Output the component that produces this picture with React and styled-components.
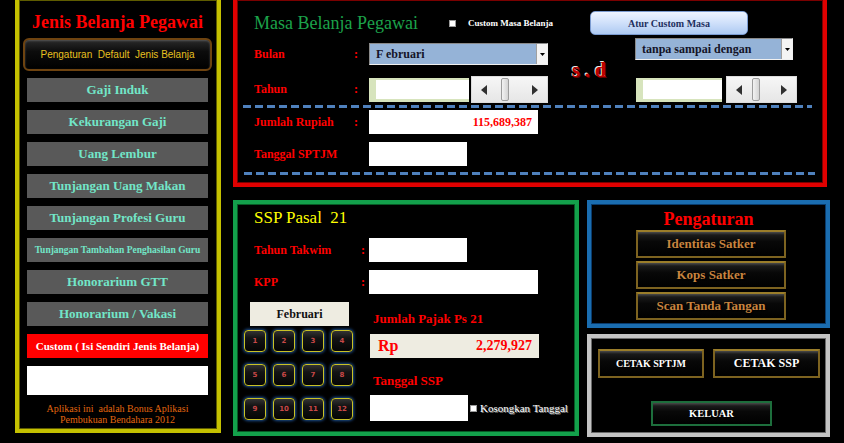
import React from 'react'
import styled, { createGlobalStyle } from 'styled-components'

const serif = `'Liberation Serif', 'Times New Roman', serif`

const GlobalStyle = createGlobalStyle`
  html, body { margin: 0; padding: 0; background: #000; }
  body { width: 844px; height: 443px; overflow: hidden; font-family: ${serif}; }
  * { box-sizing: border-box; }
`

const Page = styled.div`
  display: flex;
  gap: 12px;
  padding-left: 15px;
  height: 443px;
  background: #000;
`

/* ---------- left side menu ---------- */

const Sidebar = styled.aside`
  width: 206px;
  height: 433px;
  border: 4px solid #c4c000;
  border-top: none;
  box-shadow: inset 0 0 0 1px #5e5c00;
  padding: 0 9px 0 8px;
  display: flex;
  flex-direction: column;
`

const SideTitle = styled.h1`
  margin: 10px 0 0;
  line-height: 24px;
  font-size: 18px;
  font-weight: bold;
  color: #ff0000;
  text-align: center;
`

const DefaultBox = styled.div`
  margin: 4px -4px 0;
  height: 33px;
  display: flex;
  align-items: center;
  justify-content: center;
  border: 2px solid #6e4310;
  border-radius: 6px;
  background: linear-gradient(#2a2a2a, #0c0c0c 40%, #000);
  box-shadow: inset 0 1px 2px #555;
  font-family: 'Liberation Sans', Arial, sans-serif;
  font-size: 10px;
  color: #e8c020;
  white-space: pre;
`

const MenuList = styled.div`
  margin-top: 7px;
  display: flex;
  flex-direction: column;
  gap: 8px;
`

const MenuButton = styled.div`
  height: 24px;
  display: flex;
  align-items: center;
  justify-content: center;
  background: ${p => (p.$custom ? '#ff0000' : '#595959')};
  color: ${p => (p.$custom ? '#ffffff' : '#72e6c8')};
  font-weight: bold;
  font-size: ${p => p.$size || 13}px;
  white-space: nowrap;
`

const Blank = styled.div`
  margin-top: 8px;
  height: 29px;
  background: #fff;
`

const SideNote = styled.p`
  margin: 8px 0 0;
  font-size: 10px;
  line-height: 11px;
  color: #e2660f;
  text-align: center;
  white-space: pre;
`

/* ---------- shared ---------- */

const Main = styled.div`
  width: 597px;
  display: flex;
  flex-direction: column;
`

const Panel = styled.section`
  width: ${p => p.$w}px;
  height: ${p => p.$h}px;
  border: 4px solid ${p => p.$color};
  border-top: ${p => (p.$open ? 'none' : `4px solid ${p.$color}`)};
  box-shadow: inset 0 0 0 1px ${p => p.$shade};
  display: flex;
  flex-direction: column;
`

const FieldRow = styled.div`
  display: flex;
  align-items: center;
  height: ${p => p.$h || 24}px;
  margin-top: ${p => p.$mt || 0}px;
  padding-left: ${p => p.$pl ?? 17}px;
`

const Label = styled.span`
  width: ${p => p.$w || 98}px;
  color: #ff0000;
  font-weight: bold;
  font-size: ${p => p.$size || 12}px;
  white-space: nowrap;
`

const Colon = styled.span`
  width: ${p => p.$w || 17}px;
  padding-left: 2px;
  color: #ff0000;
  font-weight: bold;
  font-size: 12px;
`

const Box = styled.div`
  width: ${p => p.$w}px;
  height: ${p => p.$h || 24}px;
  background: ${p => p.$bg || '#ffffff'};
  display: flex;
  align-items: center;
  justify-content: flex-end;
  padding-right: 6px;
  color: #ff0000;
  font-weight: bold;
  font-size: 12px;
`

const Check = styled.span`
  width: 7px;
  height: 7px;
  background: #fff;
  border: 1px solid #9a9a9a;
  flex: none;
`

const Dash = styled.div`
  height: 3px;
  margin: ${p => p.$m};
  background: repeating-linear-gradient(90deg, #4f81bd 0 8px, transparent 8px 12px);
`

/* ---------- masa belanja ---------- */

const Header = styled.div`
  display: flex;
  align-items: center;
  margin-top: 11px;
  height: 24px;
  padding-left: 17px;
`

const HeaderTitle = styled.h2`
  margin: 0;
  width: 195px;
  font-size: 18px;
  font-weight: normal;
  line-height: 24px;
  color: #1ca24a;
  white-space: nowrap;
`

const CheckLabel = styled.label`
  width: 141px;
  display: flex;
  align-items: center;
  gap: 12px;
  font-size: 9px;
  font-weight: bold;
  color: #fff;
  white-space: nowrap;
`

const AturButton = styled.button`
  width: 158px;
  height: 24px;
  padding: 0;
  border: 1px solid #7b9bd0;
  border-radius: 5px;
  background: linear-gradient(#eef4ff, #cfe0fa 50%, #aecaf2);
  color: #1f3060;
  font-family: ${serif};
  font-weight: bold;
  font-size: 10px;
`

const Period = styled.div`
  display: flex;
  align-items: flex-start;
  margin-top: 3px;
  padding-left: 17px;
`

const Column = styled.div`
  display: flex;
  flex-direction: column;
  padding-top: ${p => p.$pt || 0}px;
  margin-left: ${p => p.$ml || 0}px;
`

const Select = styled.div`
  width: ${p => p.$w}px;
  height: 22px;
  display: flex;
  align-items: center;
  background: #95b3d7;
  border: 1px solid #f0f0f0;
  border-left-color: #8a8a8a;
  border-top-color: #8a8a8a;
  padding-left: 6px;
  color: #141428;
  font-weight: bold;
  font-size: 12px;
  white-space: pre;
`

const SelectArrow = styled.span`
  margin-left: auto;
  width: 11px;
  height: 100%;
  background: #f4f4f4;
  border-left: 1px solid #a0a0a0;
  display: flex;
  align-items: center;
  justify-content: center;
`

const YearField = styled.div`
  width: ${p => p.$w}px;
  height: 24px;
  margin-left: ${p => p.$ml || 0}px;
  background: #d7e4bd;
  padding: 2px 0 3px 7px;
  &::after {
    content: '';
    display: block;
    height: 100%;
    background: #fff;
  }
`

const Scroll = styled.div`
  width: ${p => p.$w}px;
  height: 27px;
  margin-left: ${p => p.$ml}px;
  display: flex;
  align-items: center;
  padding: 0 9px;
  background: linear-gradient(#f6f6f6, #e6e6e6);
  border: 1px solid #dcdcdc;
`

const Thumb = styled.span`
  width: 8px;
  height: 23px;
  margin-left: ${p => p.$ml}px;
  margin-right: auto;
  background: linear-gradient(90deg, #f2f2f2, #d4d4d4);
  border: 1px solid #9c9c9c;
  border-radius: 2px;
`

const SD = styled.span`
  margin: 21px 0 0 24px;
  width: 34px;
  line-height: 22px;
  font-size: 20px;
  font-weight: bold;
  color: #c00000;
  text-shadow: -1px -1px 0 #e8e8e8, 1px 1px 0 #600000;
  white-space: pre;
`

/* ---------- ssp ---------- */

const BottomRow = styled.div`
  display: flex;
  gap: 8px;
  margin-top: 13px;
`

const SspTitle = styled.h2`
  margin: 3px 0 0;
  padding-left: 17px;
  line-height: 22px;
  font-size: 17px;
  font-weight: normal;
  color: #ffff00;
  white-space: pre;
`

const Lower = styled.div`
  display: flex;
  margin-top: 8px;
  padding-left: 7px;
`

const MonthHeader = styled.div`
  margin-left: 6px;
  width: 99px;
  height: 24px;
  background: #eeece1;
  display: flex;
  align-items: center;
  justify-content: center;
  color: #111;
  font-weight: bold;
  font-size: 12px;
`

const MonthGrid = styled.div`
  margin-top: 4px;
  display: grid;
  grid-template-columns: repeat(4, 22px);
  column-gap: 7px;
  row-gap: 12px;
`

const MonthKey = styled.div`
  width: 22px;
  height: 22px;
  border: 1.5px solid #c9c226;
  border-radius: 4px;
  background: linear-gradient(#333 0%, #141414 35%, #050505);
  box-shadow: 0 0 3px 1px #1d4f8f;
  display: flex;
  align-items: center;
  justify-content: center;
  color: #c84848;
  font-size: 7px;
  font-weight: bold;
  font-family: 'DejaVu Sans', sans-serif;
`

const BigLabel = styled.div`
  margin-top: ${p => p.$mt}px;
  padding-left: 3px;
  line-height: 20px;
  color: #ff0000;
  font-weight: bold;
  font-size: 13px;
`

const RpBox = styled.div`
  margin-top: 5px;
  width: 169px;
  height: 24px;
  background: #eeece1;
  display: flex;
  align-items: center;
  justify-content: space-between;
  padding: 0 7px 0 8px;
  color: #ff0000;
  font-weight: bold;
`

const Rp = styled.span`
  font-size: ${p => p.$size}px;
`

const DateRow = styled.div`
  margin-top: 4px;
  display: flex;
  align-items: center;
  gap: 2px;
`

const Kosong = styled.span`
  margin-left: 1px;
  font-size: 11px;
  color: #fff;
  text-shadow: 1px 1px 0 #777;
  white-space: nowrap;
`

/* ---------- pengaturan & cetak ---------- */

const SideCol = styled.div`
  display: flex;
  flex-direction: column;
  gap: 6px;
`

const SettingsTitle = styled.h2`
  margin: 4px 0 0;
  line-height: 22px;
  text-align: center;
  font-size: 18px;
  font-weight: bold;
  color: #ff0000;
`

const SettingsList = styled.div`
  margin-left: 45px;
  display: flex;
  flex-direction: column;
  gap: 3px;
`

const DarkButton = styled.button`
  width: ${p => p.$w}px;
  height: ${p => p.$h}px;
  padding: 0;
  border: 2px solid ${p => p.$edge || '#7d6320'};
  border-top-color: ${p => p.$edge || '#9a7d2a'};
  background: linear-gradient(#4a4a4a 0, #1a1a1a 3px, #080808 40%, #000);
  color: ${p => p.$color || '#fff'};
  font-family: ${serif};
  font-weight: bold;
  font-size: ${p => p.$size || 12}px;
  text-shadow: 1px 1px 1px #000;
  white-space: nowrap;
`

const PrintRow = styled.div`
  display: flex;
  gap: 9px;
  margin: 11px 0 0 7px;
`

const ExitRow = styled.div`
  margin: 23px 0 0 60px;
`

const LeftArrow = () => (
  <svg width="6" height="10" viewBox="0 0 6 10">
    <polygon points="6,0 0,5 6,10" fill="#303030" />
  </svg>
)

const RightArrow = () => (
  <svg width="6" height="10" viewBox="0 0 6 10">
    <polygon points="0,0 6,5 0,10" fill="#303030" />
  </svg>
)

const DownArrow = () => (
  <svg width="5" height="3" viewBox="0 0 5 3">
    <polygon points="0,0 5,0 2.5,3" fill="#000" />
  </svg>
)

const menu = [
  { text: 'Gaji Induk' },
  { text: 'Kekurangan Gaji' },
  { text: 'Uang Lembur' },
  { text: 'Tunjangan Uang Makan' },
  { text: 'Tunjangan Profesi Guru' },
  { text: 'Tunjangan Tambahan Penghasilan Guru', size: 9.5 },
  { text: 'Honorarium GTT' },
  { text: 'Honorarium / Vakasi' },
  { text: 'Custom ( Isi Sendiri Jenis Belanja)', size: 11, custom: true },
]

const months = Array.from({ length: 12 }, (_, i) => i + 1)

export default function App() {
  return (
    <>
      <GlobalStyle />
      <Page>
        <Sidebar>
          <SideTitle>Jenis Belanja Pegawai</SideTitle>
          <DefaultBox>{'Pengaturan  Default  Jenis Belanja'}</DefaultBox>
          <MenuList>
            {menu.map(m => (
              <MenuButton key={m.text} $size={m.size} $custom={m.custom}>
                {m.text}
              </MenuButton>
            ))}
          </MenuList>
          <Blank />
          <SideNote>{'Aplikasi ini  adalah Bonus Aplikasi\nPembukuan Bendahara 2012'}</SideNote>
        </Sidebar>

        <Main>
          <Panel $w={594} $h={187} $color="#e00000" $shade="#7a0000" $open>
            <Header>
              <HeaderTitle>Masa Belanja Pegawai</HeaderTitle>
              <CheckLabel>
                <Check />
                Custom Masa Belanja
              </CheckLabel>
              <AturButton>Atur Custom Masa</AturButton>
            </Header>

            <Period>
              <Column $pt={5}>
                <FieldRow $h={22} $pl={0}>
                  <Label>Bulan</Label>
                  <Colon>:</Colon>
                  <Select $w={179}>
                    {'F ebruari'}
                    <SelectArrow><DownArrow /></SelectArrow>
                  </Select>
                </FieldRow>
                <FieldRow $h={27} $mt={11} $pl={0}>
                  <Label>Tahun</Label>
                  <Colon>:</Colon>
                  <YearField $w={100} />
                  <Scroll $w={77} $ml={2}>
                    <LeftArrow />
                    <Thumb $ml={14} />
                    <RightArrow />
                  </Scroll>
                </FieldRow>
              </Column>

              <SD>{'s . d'}</SD>

              <Column $ml={29}>
                <Select $w={158}>
                  tanpa sampai dengan
                  <SelectArrow><DownArrow /></SelectArrow>
                </Select>
                <FieldRow $h={27} $mt={16} $pl={0}>
                  <YearField $w={86} $ml={1} />
                  <Scroll $w={71} $ml={4}>
                    <LeftArrow />
                    <Thumb $ml={10} />
                    <RightArrow />
                  </Scroll>
                </FieldRow>
              </Column>
            </Period>

            <Dash $m="2px 11px 0 6px" />

            <FieldRow $mt={2}>
              <Label>Jumlah Rupiah</Label>
              <Colon>:</Colon>
              <Box $w={169}>115,689,387</Box>
            </FieldRow>
            <FieldRow $mt={8}>
              <Label>Tanggal SPTJM</Label>
              <Colon />
              <Box $w={98} />
            </FieldRow>

            <Dash $m="6px 8px 0 7px" />
          </Panel>

          <BottomRow>
            <Panel $w={346} $h={236} $color="#13a04b" $shade="#075a26">
              <SspTitle>{'SSP Pasal  21'}</SspTitle>
              <FieldRow $mt={9}>
                <Label $w={105}>Tahun Takwim</Label>
                <Colon $w={10}>:</Colon>
                <Box $w={98} />
              </FieldRow>
              <FieldRow $mt={8}>
                <Label $w={105}>KPP</Label>
                <Colon $w={10}>:</Colon>
                <Box $w={169} />
              </FieldRow>

              <Lower>
                <Column>
                  <MonthHeader>Februari</MonthHeader>
                  <MonthGrid>
                    {months.map(n => (
                      <MonthKey key={n}>{n}</MonthKey>
                    ))}
                  </MonthGrid>
                </Column>
                <Column $ml={17}>
                  <BigLabel $mt={7}>Jumlah Pajak Ps 21</BigLabel>
                  <RpBox>
                    <Rp $size={16}>Rp</Rp>
                    <Rp $size={14}>2,279,927</Rp>
                  </RpBox>
                  <BigLabel $mt={13}>Tanggal SSP</BigLabel>
                  <DateRow>
                    <Box $w={98} $h={26} />
                    <Check />
                    <Kosong>Kosongkan Tanggal</Kosong>
                  </DateRow>
                </Column>
              </Lower>
            </Panel>

            <SideCol>
              <Panel $w={243} $h={128} $color="#1a6db0" $shade="#0a3c6c">
                <SettingsTitle>Pengaturan</SettingsTitle>
                <SettingsList>
                  <DarkButton $w={150} $h={28} $size={13} $color="#c8843f">Identitas Satker</DarkButton>
                  <DarkButton $w={150} $h={28} $size={13} $color="#c8843f">Kops Satker</DarkButton>
                  <DarkButton $w={150} $h={28} $size={13} $color="#c8843f">Scan Tanda Tangan</DarkButton>
                </SettingsList>
              </Panel>

              <Panel $w={243} $h={103} $color="#c4c4c4" $shade="#6a6a6a">
                <PrintRow>
                  <DarkButton $w={106} $h={29} $size={10}>CETAK SPTJM</DarkButton>
                  <DarkButton $w={107} $h={29} $size={12}>CETAK SSP</DarkButton>
                </PrintRow>
                <ExitRow>
                  <DarkButton $w={121} $h={25} $size={10.5} $edge="#1d6e3c">KELUAR</DarkButton>
                </ExitRow>
              </Panel>
            </SideCol>
          </BottomRow>
        </Main>
      </Page>
    </>
  )
}
